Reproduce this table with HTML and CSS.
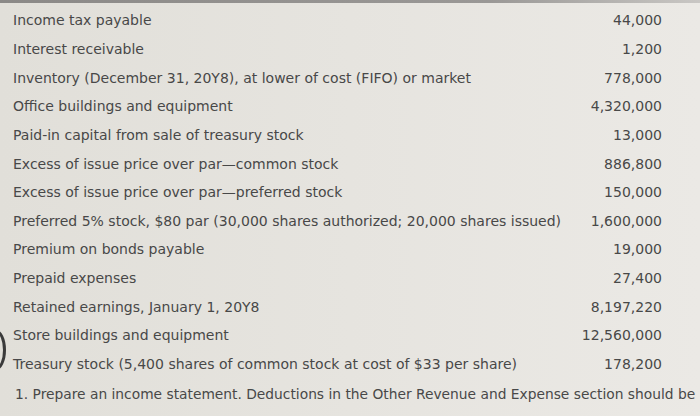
FILE: index.html
```html
<!DOCTYPE html>
<html>
<head>
<meta charset="utf-8">
<link rel="stylesheet" href="styles.css">
</head>
<body>
<div class="topbar"></div>
<div class="edge-knob"></div>
<div class="sheet">
  <table class="accounts">
    <tr><td class="label">Income tax payable</td><td class="amt">44,000</td></tr>
    <tr><td class="label">Interest receivable</td><td class="amt">1,200</td></tr>
    <tr><td class="label">Inventory (December 31, 20Y8), at lower of cost (FIFO) or market</td><td class="amt">778,000</td></tr>
    <tr><td class="label">Office buildings and equipment</td><td class="amt">4,320,000</td></tr>
    <tr><td class="label">Paid-in capital from sale of treasury stock</td><td class="amt">13,000</td></tr>
    <tr><td class="label">Excess of issue price over par—common stock</td><td class="amt">886,800</td></tr>
    <tr><td class="label">Excess of issue price over par—preferred stock</td><td class="amt">150,000</td></tr>
    <tr><td class="label">Preferred 5% stock, $80 par (30,000 shares authorized; 20,000 shares issued)</td><td class="amt">1,600,000</td></tr>
    <tr><td class="label">Premium on bonds payable</td><td class="amt">19,000</td></tr>
    <tr><td class="label">Prepaid expenses</td><td class="amt">27,400</td></tr>
    <tr><td class="label">Retained earnings, January 1, 20Y8</td><td class="amt">8,197,220</td></tr>
    <tr><td class="label">Store buildings and equipment</td><td class="amt">12,560,000</td></tr>
    <tr><td class="label">Treasury stock (5,400 shares of common stock at cost of $33 per share)</td><td class="amt">178,200</td></tr>
  </table>
  <p class="instruction">1. Prepare an income statement. Deductions in the Other Revenue and Expense section should be</p>
</div>
</body>
</html>
```
FILE: styles.css
```css
html, body {
  margin: 0;
  padding: 0;
}
body {
  width: 700px;
  height: 416px;
  overflow: hidden;
  position: relative;
  background: linear-gradient(90deg, #e1dfd9 0%, #e6e4df 50%, #ebe9e5 100%);
  font-family: "DejaVu Sans", Verdana, sans-serif;
  color: #484848;
}
.topbar {
  height: 3px;
  background: linear-gradient(90deg, #8b8987 0%, #9a9896 70%, #c9c7c4 100%);
}
.edge-knob {
  position: absolute;
  left: -14px;
  top: 330px;
  width: 14px;
  height: 34px;
  border: 3px solid #3a3a3a;
  border-radius: 50%;
}
.sheet {
  padding: 3px 0 0 13px;
}
.accounts {
  border-collapse: collapse;
  width: 649px;
}
.accounts td {
  height: 28.65px;
  padding: 0;
  font-size: 14px;
  white-space: nowrap;
  vertical-align: middle;
}
.accounts .amt {
  text-align: right;
}
.instruction {
  margin: 8px 0 0 2px;
  font-size: 13.8px;
  white-space: nowrap;
}
```
